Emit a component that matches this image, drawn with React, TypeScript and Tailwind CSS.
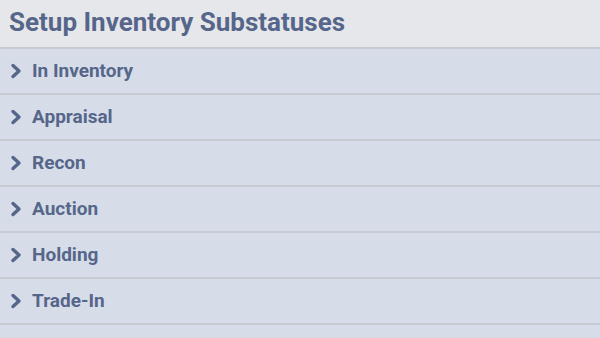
const items = ['In Inventory', 'Appraisal', 'Recon', 'Auction', 'Holding', 'Trade-In'];

function Chevron() {
  return (
    <svg viewBox="0 0 12 16" className="w-[12px] h-[16px] shrink-0">
      <path d="M3 2.5 L9 8 L3 13.5" fill="none" stroke="currentColor" strokeWidth="3.4" strokeLinecap="round" strokeLinejoin="round" />
    </svg>
  );
}

export default function App() {
  return (
    <div className="w-[600px] h-[338px] overflow-hidden bg-[#d6dde8] text-[#56668a] font-['Roboto',sans-serif]">
      <div className="h-[49px] flex items-center px-[9px] pb-[3px] bg-[#e6e7eb] border-b-2 border-[#c6cbd2]">
        <h1 className="text-[26px] font-bold">Setup Inventory Substatuses</h1>
      </div>
      {items.map((item) => (
        <div key={item} className="h-[46px] flex items-center gap-[10px] pl-[10px] border-b-2 border-[#c6cbd2]">
          <Chevron />
          <span className="text-[19px] font-bold">{item}</span>
        </div>
      ))}
      <div className="h-[46px]" />
    </div>
  );
}
